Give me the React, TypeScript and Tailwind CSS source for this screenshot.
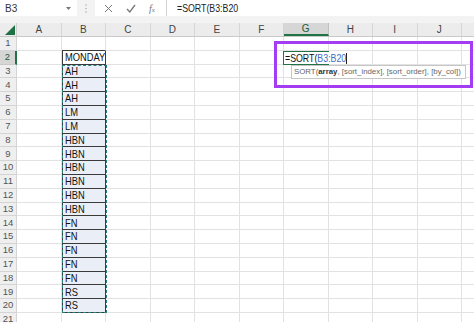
import React from 'react';

const COLS = ['A', 'B', 'C', 'D', 'E', 'F', 'G', 'H', 'I', 'J', 'K'];
const ROWS = Array.from({ length: 21 }, (_, i) => i + 1);

const B_VALUES: Record<number, string> = {
  2: 'MONDAY',
  3: 'AH', 4: 'AH', 5: 'AH',
  6: 'LM', 7: 'LM',
  8: 'HBN', 9: 'HBN', 10: 'HBN', 11: 'HBN', 12: 'HBN', 13: 'HBN',
  14: 'FN', 15: 'FN', 16: 'FN', 17: 'FN', 18: 'FN',
  19: 'RS', 20: 'RS',
};

const sans = { fontFamily: "'Liberation Sans', Arial, sans-serif" };

const FormulaBar: React.FC = () => (
  <div className="flex h-[16px] bg-[#f3f3f3]" style={sans}>
    {/* name box */}
    <div className="w-[77px] shrink-0 bg-white flex items-center justify-between pl-[5px] pr-[6px]">
      <span className="text-[10px] text-[#333]">B3</span>
      <svg width="5" height="3" viewBox="0 0 5 3">
        <path d="M0 0 L5 0 L2.5 3 Z" fill="#777" />
      </svg>
    </div>
    <div className="w-[18px] shrink-0 flex items-center justify-center">
      <svg width="2" height="9" viewBox="0 0 2 9">
        <circle cx="1" cy="1" r="0.8" fill="#b0b0b0" />
        <circle cx="1" cy="4.5" r="0.8" fill="#b0b0b0" />
        <circle cx="1" cy="8" r="0.8" fill="#b0b0b0" />
      </svg>
    </div>
    {/* cancel / enter / fx */}
    <div className="w-[72px] shrink-0 bg-white flex items-center pl-[9px] gap-[13px] border-r border-[#d4d4d4]">
      <svg width="9" height="9" viewBox="0 0 9 9">
        <path d="M1 1 L8 8 M8 1 L1 8" stroke="#777" strokeWidth="1" />
      </svg>
      <svg width="10" height="9" viewBox="0 0 10 9">
        <path d="M1 5 L3.8 8 L9 1" stroke="#777" strokeWidth="1.3" fill="none" />
      </svg>
      <span className="text-[10px] italic text-[#777]" style={{ fontFamily: "'Liberation Serif', serif" }}>
        f<span className="text-[7px]">x</span>
      </span>
    </div>
    <div className="flex-1 bg-white flex items-center pl-[10px]">
      <span className="inline-block origin-left scale-x-[0.8] text-[11px] text-[#222] whitespace-nowrap">=SORT(B3:B20</span>
    </div>
  </div>
);

const HeaderRow: React.FC = () => (
  <div className="flex h-[14px] bg-[#ececec] border-b border-[#c9c9c9]" style={sans}>
    <div className="w-[17px] shrink-0 relative border-r border-[#d0d0d0]">
      <svg className="absolute right-[1px] bottom-[1px]" width="10" height="10" viewBox="0 0 10 10">
        <path d="M10 0 L10 10 L0 10 Z" fill="#1f7145" />
      </svg>
    </div>
    {COLS.map((c) => (
      <div
        key={c}
        className={
          c === 'G'
            ? 'w-[44.5px] shrink-0 flex items-center justify-center bg-[#d6d6d6] border-r border-[#c0c0c0] border-b-[2px] border-b-[#217346] text-[10px] text-[#1e5c36]'
            : 'w-[44.5px] shrink-0 flex items-center justify-center border-r border-[#d6d6d6] text-[10px] text-[#444]'
        }
      >
        {c === 'K' ? '' : c}
      </div>
    ))}
  </div>
);

const GridRow: React.FC<{ r: number }> = ({ r }) => (
  <div className="flex h-[13.8px]" style={sans}>
    <div
      className={
        r === 2
          ? 'w-[17px] shrink-0 flex items-center justify-center bg-[#d6d6d6] border-r-[2px] border-r-[#217346] border-b border-b-[#c8c8c8] text-[9.5px] text-[#1e5c36]'
          : 'w-[17px] shrink-0 flex items-center justify-center bg-[#efefef] border-r border-b border-[#d4d4d4] text-[9.5px] text-[#555]'
      }
    >
      {r}
    </div>
    {COLS.map((c) => {
      if (c === 'B') {
        const v = B_VALUES[r];
        if (v) {
          return (
            <div
              key={c}
              className={
                r === 2
                  ? 'w-[44.5px] shrink-0 flex items-center pl-[2px] bg-white border-l border-r border-b border-[#3a3a3a] overflow-hidden'
                  : 'w-[44.5px] shrink-0 flex items-center pl-[2px] bg-[#e9eef7] border-l border-r border-b border-[#3a3a3a] overflow-hidden'
              }
            >
              <span className="inline-block origin-left scale-x-[0.85] text-[11px] text-[#111] whitespace-nowrap">{v}</span>
            </div>
          );
        }
        return (
          <div
            key={c}
            className={
              r === 1
                ? 'w-[44.5px] shrink-0 border-r border-b border-r-[#e2e2e2] border-b-[#3a3a3a]'
                : 'w-[44.5px] shrink-0 border-r border-b border-[#e2e2e2]'
            }
          />
        );
      }
      return <div key={c} className="w-[44.5px] shrink-0 border-r border-b border-[#e2e2e2]" />;
    })}
  </div>
);

export default function App() {
  return (
    <div className="relative w-[474px] h-[322px] overflow-hidden bg-white">
      <FormulaBar />
      <div className="h-[7px] bg-[#f3f3f3]" />
      <HeaderRow />
      {ROWS.map((r) => (
        <GridRow key={r} r={r} />
      ))}

      {/* marching ants around B3:B20 */}
      <div className="absolute left-[61.5px] top-[64.6px] w-[45.5px] h-[248.4px] border-[1.5px] border-dashed border-[#2a7f7b] pointer-events-none" />

      {/* active cell G2 being edited */}
      <div className="absolute left-[283px] top-[50.5px] w-[45.5px] h-[14.8px] border-[1.5px] border-[#217346]" />
      <div className="absolute left-[284.5px] top-[52px] w-[64px] h-[12px] bg-white" />
      <div className="absolute left-[285px] top-[50.8px] h-[14px] flex items-center" style={sans}>
        <span className="inline-block origin-left scale-x-[0.8] text-[11px] text-[#111] whitespace-nowrap">
          =SORT(<span className="text-[#3d6bc2]">B3:B20</span>
        </span>
      </div>
      <div className="absolute left-[346px] top-[52.5px] w-[1px] h-[11px] bg-[#222]" />

      {/* function tooltip */}
      <div
        className="absolute left-[291px] top-[65px] w-[175px] h-[14px] bg-white border border-[#c6c6c6] flex items-center pl-[2px] overflow-hidden"
        style={sans}
      >
        <span className="inline-block origin-left scale-x-[0.98] text-[8px] text-[#666] whitespace-nowrap">
          SORT(<span className="font-bold text-[#333]">array</span>, [sort_index], [sort_order], [by_col])
        </span>
      </div>

      {/* purple highlight */}
      <div className="absolute left-[274px] top-[41px] w-[199px] h-[47px] border-[3px] border-[#a33cf2] pointer-events-none" />
    </div>
  );
}
